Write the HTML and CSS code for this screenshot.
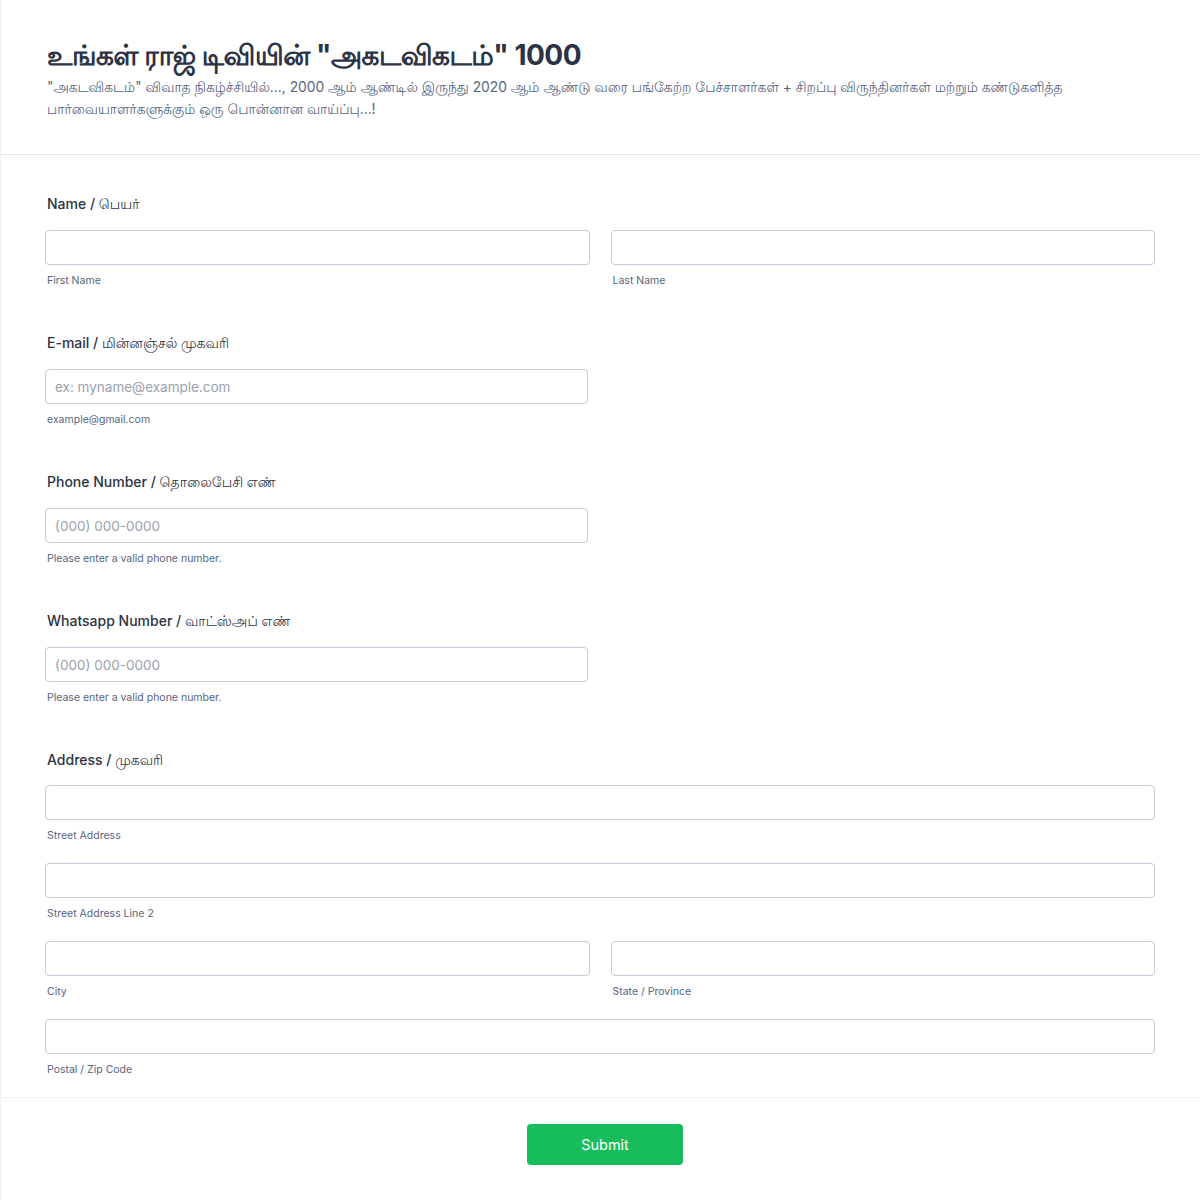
FILE: index.html
```html
<!DOCTYPE html>
<html lang="ta">
<head>
    <meta charset="UTF-8">
    <meta name="viewport" content="width=device-width, initial-scale=1.0">
    <title>அகடவிகடம் 1000</title>
    <link rel="stylesheet" href="styles.css">
</head>
<body>
    <form class="form-card" onsubmit="return false">
        <header class="form-header">
            <h1>உங்கள் ராஜ் டிவியின் "அகடவிகடம்" 1000</h1>
            <p>"அகடவிகடம்" விவாத நிகழ்ச்சியில்..., 2000 ஆம் ஆண்டில் இருந்து 2020 ஆம் ஆண்டு வரை பங்கேற்ற பேச்சாளர்கள் + சிறப்பு விருந்தினர்கள் மற்றும் கண்டுகளித்த பார்வையாளர்களுக்கும் ஒரு பொன்னான வாய்ப்பு...!</p>
        </header>

        <div class="form-body">
            <div class="field">
                <label class="field-label">Name / பெயர்</label>
                <div class="row">
                    <div class="cell">
                        <input type="text" class="input">
                        <span class="sublabel">First Name</span>
                    </div>
                    <div class="cell">
                        <input type="text" class="input">
                        <span class="sublabel">Last Name</span>
                    </div>
                </div>
            </div>

            <div class="field">
                <label class="field-label" for="email">E-mail / மின்னஞ்சல் முகவரி</label>
                <div class="half">
                    <input type="email" id="email" class="input" placeholder="ex: myname@example.com">
                    <span class="sublabel">example@gmail.com</span>
                </div>
            </div>

            <div class="field">
                <label class="field-label" for="phone">Phone Number / தொலைபேசி எண்</label>
                <div class="half">
                    <input type="tel" id="phone" class="input" placeholder="(000) 000-0000">
                    <span class="sublabel">Please enter a valid phone number.</span>
                </div>
            </div>

            <div class="field">
                <label class="field-label" for="whatsapp">Whatsapp Number / வாட்ஸ்அப் எண்</label>
                <div class="half">
                    <input type="tel" id="whatsapp" class="input" placeholder="(000) 000-0000">
                    <span class="sublabel">Please enter a valid phone number.</span>
                </div>
            </div>

            <div class="field address">
                <label class="field-label">Address / முகவரி</label>
                <div class="cell">
                    <input type="text" class="input">
                    <span class="sublabel">Street Address</span>
                </div>
                <div class="cell">
                    <input type="text" class="input">
                    <span class="sublabel">Street Address Line 2</span>
                </div>
                <div class="row">
                    <div class="cell">
                        <input type="text" class="input">
                        <span class="sublabel">City</span>
                    </div>
                    <div class="cell">
                        <input type="text" class="input">
                        <span class="sublabel">State / Province</span>
                    </div>
                </div>
                <div class="cell">
                    <input type="text" class="input">
                    <span class="sublabel">Postal / Zip Code</span>
                </div>
            </div>
        </div>

        <footer class="form-footer">
            <button type="submit" class="submit-btn">Submit</button>
        </footer>
    </form>
</body>
</html>
```

FILE: styles.css
```css
body {
    margin: 0;
    background-color: #fff;
    font-family: Inter, "Lohit Tamil", sans-serif;
    color: #2c3345;
}

.form-card {
    border-left: 1px solid #f1f1f4;
    min-height: 1200px;
}

.form-header {
    padding: 37px 46px 34px;
    border-bottom: 1px solid #e3e5ec;
}

.form-header h1 {
    margin: 0;
    font-size: 28px;
    line-height: 36px;
    font-weight: 700;
    color: #2c3345;
    letter-spacing: -0.5px;
}

.form-header p {
    margin: 3px 0 0;
    font-size: 13.8px;
    line-height: 22px;
    color: #57647e;
}

.form-body {
    padding: 39px 45px 19px 44px;
}

.field {
    display: flex;
    flex-direction: column;
    margin-bottom: 44px;
}

.field:last-child {
    margin-bottom: 0;
}

.field-label {
    font-size: 14px;
    line-height: 20px;
    font-weight: 500;
    color: #2c3345;
    margin: 0 0 16px 2px;
}

.address .field-label {
    margin-bottom: 15px;
}

.row {
    display: grid;
    grid-template-columns: 1fr 1fr;
    gap: 21px;
}

.cell,
.half {
    display: flex;
    flex-direction: column;
}

.half {
    width: 543px;
}

.address .cell + .cell,
.address .cell + .row,
.address .row + .cell {
    margin-top: 19px;
}

.address .row .cell + .cell {
    margin-top: 0;
}

.input {
    box-sizing: border-box;
    height: 35px;
    width: 100%;
    padding: 0 9px;
    border: 1px solid #c3cad8;
    border-radius: 4px;
    background: #fff;
    font-family: inherit;
    font-size: 13.5px;
    color: #2c3345;
}

.input::placeholder {
    color: #9ba1ad;
}

.sublabel {
    margin: 8px 0 0 2px;
    font-size: 10.5px;
    line-height: 16px;
    color: #57647e;
}

.form-footer {
    display: flex;
    justify-content: center;
    padding: 26px 0 30px 9px;
    border-top: 1px solid #eef0f3;
}

.submit-btn {
    width: 156px;
    height: 41px;
    border: none;
    border-radius: 4px;
    background-color: #18bd5b;
    color: #fff;
    font-family: inherit;
    font-size: 14.5px;
    font-weight: 400;
    cursor: pointer;
}

.submit-btn:hover {
    background-color: #16a34f;
}
```
